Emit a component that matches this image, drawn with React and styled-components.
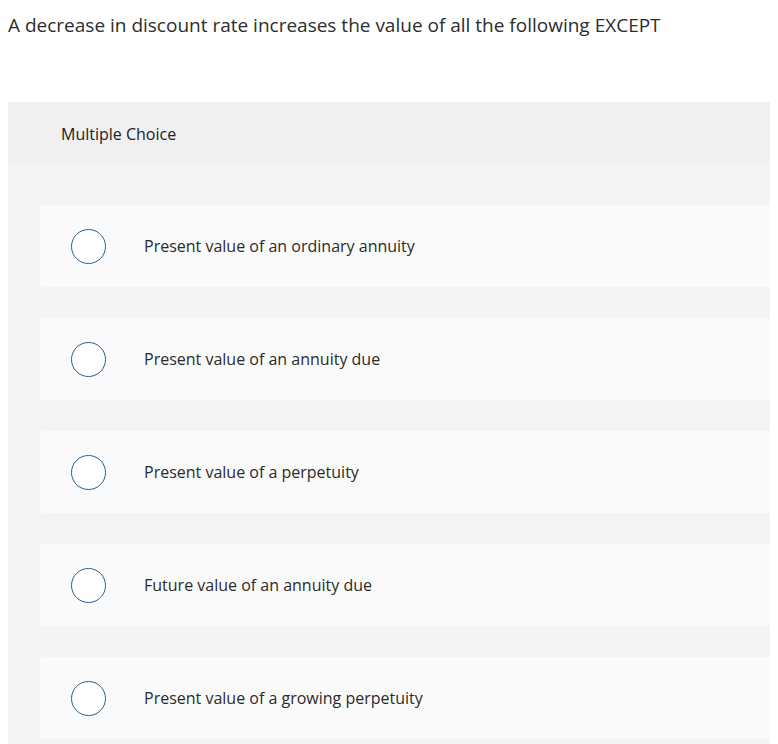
import React from "react";
import styled, { createGlobalStyle } from "styled-components";

const Global = createGlobalStyle`
  html { overflow: hidden; background: #fff; }
  body { margin: 8px 8px 0; font-family: "Open Sans", "Liberation Sans", sans-serif; color: #333; }
`;

const Question = styled.p`
  margin: 0;
  padding-top: 5px;
  font-size: 19px;
  line-height: 24px;
  color: #2d2d2d;
`;

const Panel = styled.section`
  margin-top: 65px;
  margin-right: -8px;
  border-top-left-radius: 3px;
  overflow: hidden;
`;

const PanelHeader = styled.div`
  height: 63px;
  background: #f0f0f0;
  display: flex;
  align-items: center;
  padding-left: 53px;
  font-size: 16px;
  color: #222;
`;

const PanelBody = styled.div`
  background: #f4f4f4;
  padding: 40px 0 5px 32px;
  display: flex;
  flex-direction: column;
  gap: 31px;
`;

const Option = styled.label`
  height: 82px;
  background: #fafafa;
  border-radius: 3px 0 0 3px;
  display: flex;
  align-items: center;
  padding-left: 31px;
  cursor: pointer;
`;

const Radio = styled.span`
  box-sizing: border-box;
  width: 35px;
  height: 35px;
  border-radius: 50%;
  border: 1.5px solid #2c5d8f;
  background: #fff;
  flex: none;
`;

const OptionText = styled.span`
  margin-left: 38px;
  font-size: 16px;
  color: #2b2b2b;
`;

const options = [
  "Present value of an ordinary annuity",
  "Present value of an annuity due",
  "Present value of a perpetuity",
  "Future value of an annuity due",
  "Present value of a growing perpetuity",
];

export default function App() {
  return (
    <>
      <Global />
      <Question>A decrease in discount rate increases the value of all the following EXCEPT</Question>
      <Panel>
        <PanelHeader>Multiple Choice</PanelHeader>
        <PanelBody>
          {options.map((o) => (
            <Option key={o}>
              <Radio />
              <OptionText>{o}</OptionText>
            </Option>
          ))}
        </PanelBody>
      </Panel>
    </>
  );
}
